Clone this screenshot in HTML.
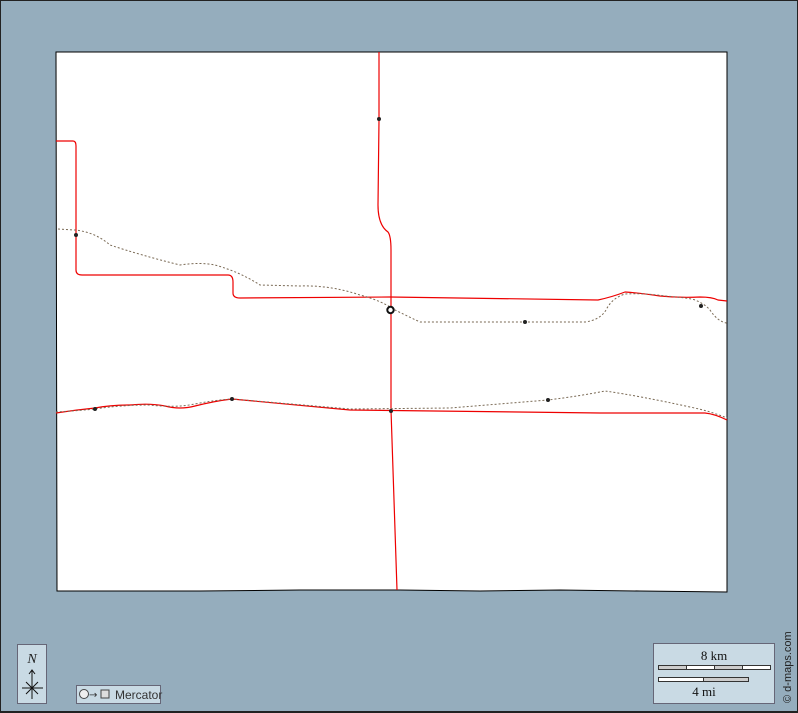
<!DOCTYPE html>
<html><head><meta charset="utf-8"><style>
html,body{margin:0;padding:0;width:798px;height:713px;overflow:hidden;background:#95adbd}
svg{display:block}
</style></head><body>
<svg width="798" height="713" viewBox="0 0 798 713" xmlns="http://www.w3.org/2000/svg">
<rect x="0.5" y="0.5" width="797" height="712" fill="#95adbd" stroke="#222" stroke-width="1"/>
<rect x="0" y="711" width="798" height="2" fill="#222"/>
<path d="M56,52 L727,52 L727,592 L640,591 L560,590 L480,591 L400,590 L300,590 L200,591 L57,591 Z" fill="#fff" stroke="#000" stroke-width="1"/>
<g fill="none" stroke="#e00" stroke-width="1.2">
<path d="M379,52 L379,120 L378,205 Q378,225 388,232 Q391,236 391,250 L391,410 L394,500 L397,590"/>
<path d="M56,141 L73,141 Q76,141 76,146 L76,270 Q76,275 82,275 L228,275 Q233,275 233,282 L233,293 Q233,298 240,298 L390,297 L598,300 Q612,297 625,292 Q640,293 660,296 Q680,298 700,297 Q712,297 718,300 L727,301"/>
<path d="M56,413 Q75,410 95,408 Q110,405 130,405 Q150,403 165,406 Q180,410 195,406 Q215,401 232,399 L350,410 L600,413 L705,413 Q715,414 727,420"/>
</g>
<g fill="none" stroke="#7a6a55" stroke-width="1" stroke-dasharray="2,2">
<path d="M58,229 L75,230 Q95,232 110,245 Q140,255 180,265 Q200,262 215,265 Q240,272 260,285 L300,286 Q330,285 360,295 Q380,300 395,310 Q405,315 420,322 L585,322 Q600,320 606,310 Q612,298 625,294 Q645,293 665,296 Q690,298 695,300 Q705,304 710,310 Q718,322 727,323"/>
<path d="M56,412 Q75,411 95,409 Q120,405 150,405 Q175,408 195,404 Q215,400 232,399 L350,409 L450,408 L548,400 Q580,396 605,391 Q640,396 690,407 Q710,411 727,418"/>
</g>
<g fill="#222">
<circle cx="379" cy="119" r="2"/><circle cx="76" cy="235" r="2"/><circle cx="525" cy="322" r="2"/>
<circle cx="701" cy="306" r="2"/><circle cx="95" cy="409" r="2"/><circle cx="232" cy="399" r="2"/>
<circle cx="391" cy="411" r="2"/><circle cx="548" cy="400" r="2"/>
</g>
<circle cx="390.5" cy="310" r="3.2" fill="#fff" stroke="#111" stroke-width="2"/>
<rect x="17.5" y="644.5" width="29" height="59" fill="#c9dae4" stroke="#667" stroke-width="1"/>
<text x="32" y="663" font-family="Liberation Serif,serif" font-style="italic" font-size="14" text-anchor="middle" fill="#222">N</text>
<g stroke="#111" stroke-width="1" fill="none">
<path d="M32,670 L32,699 M29,674 L32,670 L35,674 M22,688 L43,688 M26,682 L38,694 M38,682 L26,694"/>
</g>
<rect x="76.5" y="685.5" width="84" height="18" fill="#c9dae4" stroke="#667"/>
<circle cx="84" cy="694" r="4.5" fill="#eee" stroke="#444"/>
<text x="89" y="698" font-family="DejaVu Sans,sans-serif" font-size="10" fill="#333">→</text>
<rect x="101" y="690" width="8" height="8" fill="#ddd" stroke="#444"/>
<text x="115" y="699" font-family="Liberation Sans,sans-serif" font-size="12" fill="#333">Mercator</text>
<rect x="653.5" y="643.5" width="121" height="60" fill="#c9dae4" stroke="#667"/>
<text x="714" y="660" font-family="Liberation Serif,serif" font-size="13" text-anchor="middle" fill="#111">8 km</text>
<rect x="658.5" y="665.5" width="112" height="4" fill="#fff" stroke="#333"/>
<rect x="658.5" y="665.5" width="28" height="4" fill="#ccc" stroke="#333"/>
<rect x="714.5" y="665.5" width="28" height="4" fill="#ccc" stroke="#333"/>
<rect x="658.5" y="677.5" width="90" height="4" fill="#ccc" stroke="#333"/>
<rect x="658.5" y="677.5" width="45" height="4" fill="#fff" stroke="#333"/>
<text x="704" y="696" font-family="Liberation Serif,serif" font-size="13" text-anchor="middle" fill="#111">4 mi</text>
<text transform="translate(791,703) rotate(-90)" font-family="Liberation Sans,sans-serif" font-size="11" fill="#222">© d-maps.com</text>
</svg>
</body></html>
